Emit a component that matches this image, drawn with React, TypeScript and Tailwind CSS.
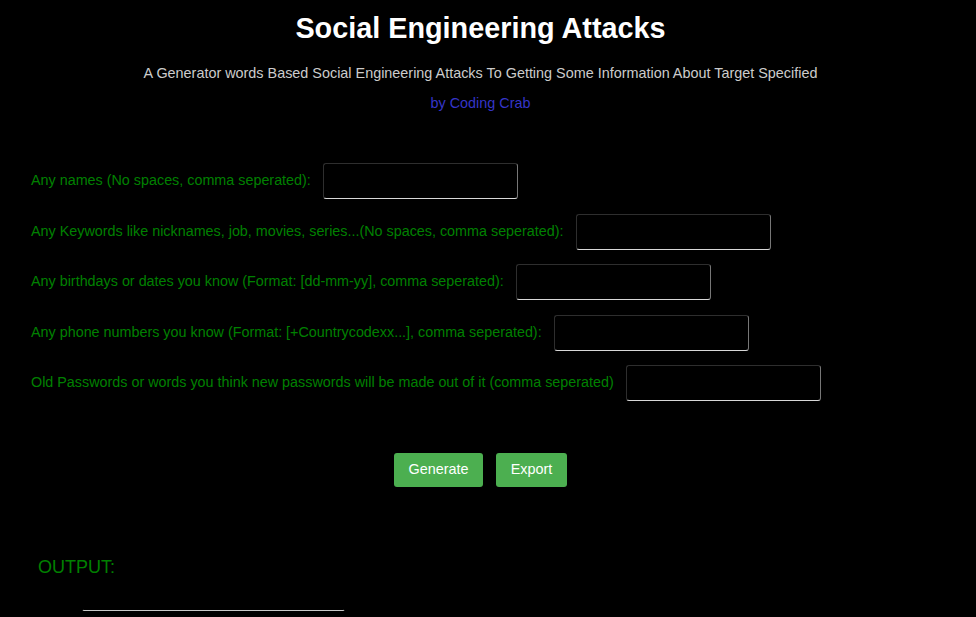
import React from "react";

const FIELDS = [
  "Any names (No spaces, comma seperated):",
  "Any Keywords like nicknames, job, movies, series...(No spaces, comma seperated):",
  "Any birthdays or dates you know (Format: [dd-mm-yy], comma seperated):",
  "Any phone numbers you know (Format: [+Countrycodexx...], comma seperated):",
  "Old Passwords or words you think new passwords will be made out of it (comma seperated)",
];

const Field = ({ label }: { label: string }) => {
  return (
    <div className="flex h-[50.5px] items-center gap-3">
      <label className="text-[14.35px] text-[#008000]">{label}</label>
      <input
        type="text"
        className="h-9 w-[195px] rounded-[3px] border border-[#2e2e2e] border-r-[#777777] border-b-[#d8d8d8] bg-black text-white outline-none"
      />
    </div>
  );
};

const App = () => {
  return (
    <div className="min-h-[617px] w-full overflow-hidden bg-black font-['Liberation_Sans',Arial,sans-serif]">
      <div className="w-[961px]">
        <div className="flex flex-col items-center pt-[12px]">
          <h1 className="text-[28.8px] font-bold leading-[32px] text-white">
            Social Engineering Attacks
          </h1>
          <p className="mt-[21px] text-[14.4px] leading-[16px] text-[#cccccc]">
            A Generator words Based Social Engineering Attacks To Getting Some Information About Target Specified
          </p>
          <p className="mt-[14px] text-[14.4px] leading-[16px] text-[#3535c8]">by Coding Crab</p>
        </div>

        <div className="mt-[45px] flex flex-col pl-[31px]">
          {FIELDS.map((f) => (
            <Field key={f} label={f} />
          ))}
        </div>

        <div className="mt-[44px] flex justify-center gap-[13px]">
          <button className="h-[34px] w-[89px] rounded-[3px] bg-[#4CAF50] text-[14.4px] text-white">
            Generate
          </button>
          <button className="h-[34px] w-[71px] rounded-[3px] bg-[#4CAF50] text-[14.4px] text-white">
            Export
          </button>
        </div>

        <div className="mt-[70px] pl-[38px] text-[18px] leading-[20px] text-[#008000]">OUTPUT:</div>

        <div className="ml-[82px] mt-[16px] h-[18px] w-[263px] rounded-[2px] border border-transparent border-b-[#c8c8c8]" />
      </div>
    </div>
  );
};

export default App;
